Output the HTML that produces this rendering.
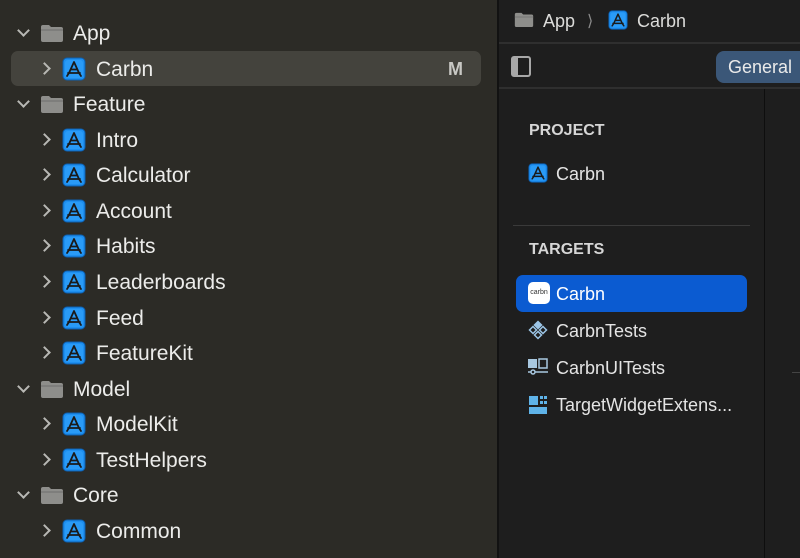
<!DOCTYPE html>
<html><head><meta charset="utf-8"><style>
*{margin:0;padding:0;box-sizing:border-box}
body{width:800px;height:558px;overflow:hidden;background:#1e1e1e;font-family:"Liberation Sans",sans-serif;color:#e8e8e6;position:relative}
#left{position:absolute;left:0;top:0;width:497px;height:558px;background:#2c2b26}
#div{position:absolute;left:497px;top:0;width:2px;height:558px;background:#121212}
.sel{position:absolute;left:11px;top:51px;width:470px;height:35px;background:#44433d;border-radius:7px}
.chev{position:absolute;width:9px;height:9px;border-right:2px solid #b8b8b4;border-bottom:2px solid #b8b8b4}
.down{transform:rotate(45deg)}
.rt{transform:rotate(-45deg)}
.fold{position:absolute;width:24px;height:18px}
.app{position:absolute;width:24px;height:24px}
#right{position:absolute;left:499px;top:0;width:301px;height:558px}
.t{position:absolute;white-space:nowrap}
</style></head><body>
<svg width="0" height="0" style="position:absolute"><defs>
<symbol id="f" viewBox="0 0 24 18"><path d="M1 3a2 2 0 0 1 2-2h6l2 2h10a2 2 0 0 1 2 2v11a2 2 0 0 1-2 2H3a2 2 0 0 1-2-2z" fill="#8e8e8b"/><path d="M1 6h22" stroke="#6f6f6c" stroke-width="1"/></symbol>
<symbol id="a" viewBox="0 0 24 24"><rect x="1" y="1" width="22" height="22" rx="4" fill="#1d8ff0" stroke="#0d5fb0" stroke-width="1"/><rect x="3" y="3" width="18" height="18" rx="3" fill="#2a9bf7"/><path d="M12 5 L7 16 M12 5 L17 16 M6 16 H18 M8.5 12.5 H15.5 M5 19 L7 16 M19 19 L17 16" stroke="#1a1a1a" stroke-width="1.8" fill="none" stroke-linecap="round"/></symbol>
</defs></svg>
<div id="left">
<div class="sel"></div>
<div class="t" style="left:448px;top:59px;font-size:18px;font-weight:bold;color:#c8c8c4">M</div>
</div>
<div id="div"></div>
<div id="leftrows"></div>
<script>
var items=[["g","App"],["c","Carbn"],["g","Feature"],["c","Intro"],["c","Calculator"],["c","Account"],["c","Habits"],["c","Leaderboards"],["c","Feed"],["c","FeatureKit"],["g","Model"],["c","ModelKit"],["c","TestHelpers"],["g","Core"],["c","Common"]];
var h="";
items.forEach(function(it,i){
 var cy=33+i*35.57;
 if(it[0]=="g"){
  h+='<div class="chev down" style="left:19px;top:'+(cy-7)+'px"></div>';
  h+='<svg class="fold" style="left:40px;top:'+(cy-9)+'px"><use href="#f"/></svg>';
  h+='<div class="t" style="left:73px;top:'+(cy-11)+'px;font-size:21px;color:#ececea">'+it[1]+'</div>';
 }else{
  h+='<div class="chev rt" style="left:40px;top:'+(cy-5)+'px"></div>';
  h+='<svg class="app" style="left:62px;top:'+(cy-12)+'px"><use href="#a"/></svg>';
  h+='<div class="t" style="left:96px;top:'+(cy-11)+'px;font-size:21px;color:#ececea">'+it[1]+'</div>';
 }
});
document.getElementById("leftrows").innerHTML=h;
</script>
<div id="right">
<svg style="position:absolute;left:15px;top:12px" width="20" height="15" viewBox="0 0 24 18"><use href="#f"/></svg>
<div class="t" style="left:44px;top:11px;font-size:18px;color:#dcdcda">App</div>
<div class="t" style="left:88px;top:11px;font-size:16px;color:#8a8a8a">⟩</div>
<svg style="position:absolute;left:109px;top:10px" width="20" height="20"><use href="#a" width="20" height="20"/></svg>
<div class="t" style="left:138px;top:11px;font-size:18px;color:#dcdcda">Carbn</div>
<div style="position:absolute;left:0;top:42px;width:301px;height:2px;background:#2f2f2f"></div>
<div style="position:absolute;left:12px;top:56px;width:20px;height:21px;border:2px solid #a8a8a8;border-radius:3px"><div style="width:5px;height:100%;background:#a8a8a8"></div></div>
<div style="position:absolute;left:217px;top:51px;width:100px;height:32px;background:#3b5778;border-radius:8px"></div>
<div class="t" style="left:229px;top:57px;font-size:18px;color:#eaeaea">General</div>
<div style="position:absolute;left:0;top:87px;width:301px;height:2px;background:#2f2f2f"></div>
<div style="position:absolute;left:265px;top:89px;width:1px;height:469px;background:#0e0e0e"></div>
<div class="t" style="left:30px;top:122px;font-size:16px;font-weight:bold;color:#d6d6d6">PROJECT</div>
<svg style="position:absolute;left:29px;top:163px" width="20" height="20"><use href="#a" width="20" height="20"/></svg>
<div class="t" style="left:57px;top:164px;font-size:18px;color:#e4e4e4">Carbn</div>
<div style="position:absolute;left:14px;top:225px;width:237px;height:1px;background:#3a3a3a"></div>
<div class="t" style="left:30px;top:241px;font-size:16px;font-weight:bold;color:#d6d6d6">TARGETS</div>
<div style="position:absolute;left:17px;top:275px;width:231px;height:37px;background:#0b5bd1;border-radius:7px"></div>
<div style="position:absolute;left:29px;top:282px;width:22px;height:22px;background:#fff;border-radius:5px;font-size:7px;color:#333;text-align:center;line-height:22px">carbn</div>
<div class="t" style="left:57px;top:284px;font-size:18px;color:#fff">Carbn</div>
<svg style="position:absolute;left:29px;top:320px" width="20" height="20" viewBox="0 0 20 20"><g fill="none" stroke="#9cc5e6" stroke-width="1.5"><path d="M10 1.5l3.5 3.5-3.5 3.5-3.5-3.5z" fill="#9cc5e6"/><path d="M5 6.5l3.5 3.5-3.5 3.5-3.5-3.5z"/><path d="M15 6.5l3.5 3.5-3.5 3.5-3.5-3.5z"/><path d="M10 11.5l3.5 3.5-3.5 3.5-3.5-3.5z"/></g></svg>
<div class="t" style="left:57px;top:321px;font-size:18px;color:#e4e4e4">CarbnTests</div>
<svg style="position:absolute;left:28px;top:357px" width="22" height="20" viewBox="0 0 22 20"><rect x="1" y="2" width="9" height="9" fill="#a8c8e0"/><rect x="12" y="2" width="8" height="9" fill="none" stroke="#a8c8e0" stroke-width="1.5"/><path d="M1 15H21" stroke="#a8c8e0" stroke-width="1.5"/><circle cx="6" cy="15" r="2" fill="#1e1e1e" stroke="#a8c8e0" stroke-width="1.5"/></svg>
<div class="t" style="left:57px;top:358px;font-size:18px;color:#e4e4e4">CarbnUITests</div>
<svg style="position:absolute;left:29px;top:395px" width="20" height="20" viewBox="0 0 20 20"><rect x="1" y="1" width="9" height="9" fill="#5fb3e8"/><rect x="12" y="1" width="3" height="3" fill="#5fb3e8"/><rect x="16" y="1" width="3" height="3" fill="#5fb3e8"/><rect x="12" y="6" width="3" height="3" fill="#5fb3e8"/><rect x="16" y="6" width="3" height="3" fill="#5fb3e8"/><rect x="1" y="12" width="18" height="7" fill="#5fb3e8"/></svg>
<div class="t" style="left:57px;top:395px;font-size:18px;color:#e4e4e4">TargetWidgetExtens...</div>
<div style="position:absolute;left:293px;top:372px;width:8px;height:1px;background:#444"></div>
</div>
</body></html>
